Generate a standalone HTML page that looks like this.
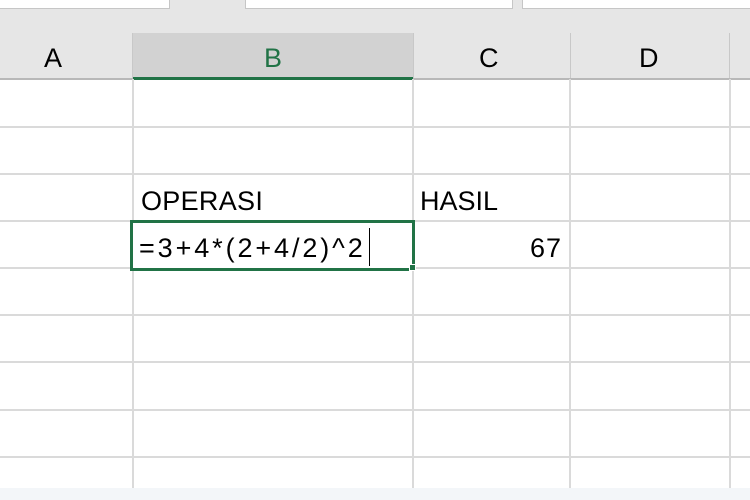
<!DOCTYPE html>
<html><head><style>
body{margin:0;width:750px;height:500px;overflow:hidden;background:#fff;position:relative;font-family:"Liberation Sans",sans-serif}
div{position:absolute;box-sizing:border-box}
.h{left:0;width:750px;height:2px;background:#dadada}
.v{top:79px;width:2px;height:410px;background:#dadada}
.hv{top:33px;width:1px;height:46px;background:#c8c8c8}
.t{font-size:27px;color:#000;line-height:30px}
</style></head><body>
<div style="left:0;top:0;width:750px;height:79px;background:#e6e6e6"></div>
<div style="left:-2px;top:-2px;width:172px;height:11px;background:#fff;border:1px solid #c6c6c6"></div>
<div style="left:245px;top:-2px;width:268px;height:11px;background:#fff;border:1px solid #c6c6c6"></div>
<div style="left:522px;top:-2px;width:240px;height:11px;background:#fff;border:1px solid #c6c6c6"></div>
<div style="left:133px;top:33px;width:280px;height:46px;background:#d2d2d2"></div>
<div class="hv" style="left:132px"></div><div class="hv" style="left:413px"></div><div class="hv" style="left:570px"></div><div class="hv" style="left:729px"></div>
<div style="left:0;top:78px;width:750px;height:2px;background:#b8b8b8"></div>
<div style="left:133px;top:77px;width:280px;height:3px;background:#217346"></div>
<div class="t" style="left:44px;top:43px">A</div>
<div class="t" style="left:264px;top:43px;color:#217346">B</div>
<div class="t" style="left:479px;top:43px">C</div>
<div class="t" style="left:639px;top:43px">D</div>
<div class="v" style="left:132px"></div><div class="v" style="left:412px"></div><div class="v" style="left:569px"></div><div class="v" style="left:729px"></div>
<div class="h" style="top:126px"></div><div class="h" style="top:173px"></div><div class="h" style="top:220px"></div><div class="h" style="top:267px"></div><div class="h" style="top:314px"></div><div class="h" style="top:361px"></div><div class="h" style="top:409px"></div><div class="h" style="top:456px"></div>
<div style="left:0;top:488px;width:750px;height:12px;background:#f3f6f9"></div>
<div class="t" style="left:141px;top:186px;letter-spacing:0.3px">OPERASI</div>
<div class="t" style="left:420px;top:186px">HASIL</div>
<div style="left:130px;top:220px;width:285px;height:51px;border:3px solid #217346;background:#fff"></div>
<div style="left:409px;top:264px;width:7px;height:7px;background:#217346;border:1px solid #fff"></div>
<div class="t" style="left:139px;top:233px;letter-spacing:2.9px">=3+4*(2+4/2)^2</div>
<div style="left:369px;top:228px;width:1px;height:38px;background:#000"></div>
<div class="t" style="left:462px;width:100px;text-align:right;top:233px;letter-spacing:1px">67</div>
</body></html>
